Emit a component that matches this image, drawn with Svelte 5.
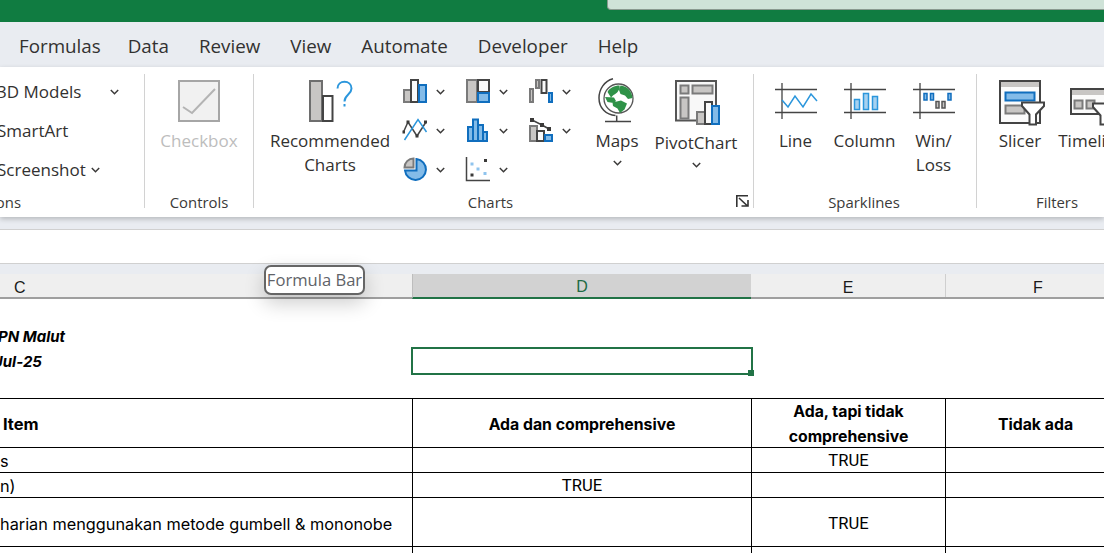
<script>
  const tabs = ['Formulas', 'Data', 'Review', 'View', 'Automate', 'Developer', 'Help'];
  const rows = [
    { cls: 'head', item: 'Item', d: 'Ada dan comprehensive', e: 'Ada, tapi tidak comprehensive', f: 'Tidak ada' },
    { cls: 'r25', item: 's', d: '', e: 'TRUE', f: '' },
    { cls: 'r25', item: 'n)', d: 'TRUE', e: '', f: '' },
    { cls: 'r49', item: 'harian menggunakan metode gumbell & mononobe', d: '', e: 'TRUE', f: '' },
    { cls: 'r25', item: '', d: '', e: '', f: '' }
  ];
</script>

{#snippet chev()}
  <svg class="chev" width="9" height="6" viewBox="0 0 9 6"><path d="M.8 1 4.5 4.7 8.2 1" /></svg>
{/snippet}

{#snippet small(body)}
  <div class="small">
    <svg width="24" height="24" viewBox="0 0 24 24">{@render body()}</svg>
    {@render chev()}
  </div>
{/snippet}

{#snippet i1()}
  <rect class="g" x="1" y="11" width="7" height="12" /><rect class="w" x="8" y="1" width="7" height="22" /><rect class="b" x="16" y="6" width="7" height="17" />
{/snippet}
{#snippet i2()}
  <rect class="g" x="1" y="1" width="10" height="22" /><rect class="w" x="12" y="1" width="11" height="12" /><rect class="b" x="12" y="14" width="11" height="9" />
{/snippet}
{#snippet i3()}
  <rect class="g" x="1" y="10" width="3" height="13" /><rect class="g" x="7" y="1" width="3" height="8" /><rect class="w" x="12.5" y="1" width="5" height="13" /><rect class="b" x="20" y="14" width="3" height="9" />
{/snippet}
{#snippet i4()}
  <path class="ld" d="M.5 14 5 4l9 14 9-14" /><path class="lb" d="M1.5 22 15 1.500 23.500 14" />
  <rect class="dk" x="3.500" y="2.500" width="3" height="3" /><rect class="dk" x="12.500" y="16.500" width="3" height="3" /><rect class="dk" x="21" y="2.500" width="3" height="3" /><rect class="dk" x="-.500" y="12.500" width="2.500" height="3" />
{/snippet}
{#snippet i5()}
  <rect class="b" x="2" y="9" width="5" height="14" /><rect class="b" x="7" y="1.500" width="5" height="21.500" /><rect class="b" x="12" y="7" width="5" height="16" /><rect class="b" x="17" y="14" width="4" height="9" />
{/snippet}
{#snippet i6()}
  <rect class="g" x="1" y="8" width="7" height="15" /><rect class="w" x="8" y="13" width="7" height="10" /><rect class="b" x="16" y="17" width="7" height="6" />
  <path class="ld" d="M3 2 13 7l7 4" /><rect class="dk" x="1" y="0" width="4" height="4" /><rect class="dk" x="11" y="5" width="4" height="4" /><rect class="dk" x="18" y="9" width="4" height="4" />
{/snippet}
{#snippet i7()}
  <path class="g" d="M10.500 1.500A9 9 0 0 0 1.500 10.500h9z" /><path class="pie" d="M13.500 2a10.500 10.500 0 1 1-11.500 11.500h11.500z" />
{/snippet}
{#snippet i8()}
  <path class="ld" d="M.5 0v23.500H24" />
  <rect class="dk" x="18" y="2" width="3" height="3" /><rect class="lt" x="4.500" y="5.500" width="3" height="3" /><rect class="lt" x="10.500" y="10.500" width="3" height="3" /><rect class="lt" x="17.500" y="15" width="3" height="3" /><rect class="dk" x="4.500" y="16.500" width="3" height="3" />
{/snippet}

<div class="page">
  <div class="titlebar"><div class="search"></div></div>

  <nav class="tabs">
    {#each tabs as t}<span>{t}</span>{/each}
  </nav>

  <section class="ribbon">
    <div class="group g-ill">
      <div class="body list">
        <div class="row models"><span>3D Models</span>{@render chev()}</div>
        <div class="row"><span>SmartArt</span></div>
        <div class="row shot"><span>Screenshot</span>{@render chev()}</div>
      </div>
      <div class="label ill"><span>Illustrations</span></div>
    </div>

    <div class="group g-ctl">
      <div class="body">
        <div class="big ctl">
          <div class="ic">
            <svg width="42" height="42" viewBox="0 0 42 42"><rect x="1" y="1" width="40" height="40" fill="#f1f1f1" stroke="#a6a6a6" stroke-width="2" /><path d="M5 27l9 6L37 9" fill="none" stroke="#b4b4b4" stroke-width="2" /></svg>
          </div>
          <span class="off">Checkbox</span>
        </div>
      </div>
      <div class="label">Controls</div>
    </div>

    <div class="group g-chart">
      <div class="body">
        <div class="big rec">
          <div class="ic">
            <svg width="44" height="42" viewBox="0 0 44 42">
              <rect x="1" y="1" width="12" height="40" fill="#c8c6c4" stroke="#6e6e6e" stroke-width="2" />
              <rect x="14" y="16" width="9.500" height="25" fill="#fff" stroke="#444" stroke-width="2" />
              <path d="M28.500 8.500c0-9 14-9 14 0 0 6-7 6-7 13" fill="none" stroke="#2b96dc" stroke-width="2" />
              <rect x="34.500" y="24" width="2" height="2.500" fill="#2b96dc" />
            </svg>
          </div>
          <span>Recommended<br />Charts</span>
        </div>

        <div class="smalls">
          {@render small(i1)}{@render small(i2)}{@render small(i3)}
          {@render small(i4)}{@render small(i5)}{@render small(i6)}
          {@render small(i7)}{@render small(i8)}
        </div>

        <div class="big maps">
          <div class="ic globe">
            <svg width="38" height="46" viewBox="0 0 38 46">
              <circle cx="20.500" cy="20.500" r="14.500" fill="#fff" stroke="#555" stroke-width="1.300" />
              <path d="M9.500 14c2-4 7-6.500 12-6.500 1 3-2 8-6 9.500l-2.500 2.500zM22.500 7.500c6.500.5 11.500 5.500 12 12.500l-4.500 1-3-3.500-4.500-1.500-1.500-4zM7 19l9 .5 2 3.500-2.500 2-6-1zM14.500 24.500l8.500-2 6 3-2.500 6-4.500 3.500-2.500-4.500-4.500-2.500z" fill="#2f9248" />
              <path d="M15 .8C6.500 3 1 11 1 20c0 10 7 17 16.500 17.500M18.700 37.500V43M7 43.500h26" fill="none" stroke="#444" stroke-width="1.500" />
            </svg>
          </div>
          <span>Maps</span>
          {@render chev()}
        </div>

        <div class="big pivot">
          <div class="ic">
            <svg width="45" height="45" viewBox="0 0 45 45">
              <path d="M22 40.500H1V1h40v25" fill="#f8f8f8" stroke="#555" stroke-width="2" />
              <rect x="5.500" y="5.500" width="8" height="8" class="g" /><rect x="17.500" y="5.500" width="20" height="8" class="g" /><rect x="5.500" y="17.500" width="8" height="21" class="g" />
              <rect x="22" y="32" width="8" height="12" class="g" /><rect x="30" y="22" width="7" height="22" class="w" /><rect x="37" y="26" width="7" height="18" class="b" />
            </svg>
          </div>
          <span>PivotChart</span>
          {@render chev()}
        </div>
      </div>
      <div class="label charts">Charts</div>
      <svg class="launch" width="13" height="12" viewBox="0 0 13 12"><path d="M.8 12V.8H12M3 3l8 7.500M5.500 11h6.500V5" fill="none" stroke="#333" stroke-width="1.600" /></svg>
    </div>

    <div class="group g-spark">
      <div class="body">
        <div class="big spark">
          <div class="ic">
            <svg class="sp" width="42" height="36" viewBox="0 0 42 36"><path class="axis" d="M0 6.500h42M0 29.500h42M7 0v36" /><path d="M7 17l6 7 7-11 8 11 8-13 6 7" fill="none" stroke="#2b96dc" stroke-width="1.500" /></svg>
          </div>
          <span>Line</span>
        </div>
        <div class="big spark">
          <div class="ic">
            <svg class="sp" width="42" height="36" viewBox="0 0 42 36"><path class="axis" d="M0 6.500h42M0 29.500h42M7 0v36" /><rect class="sb" x="10.500" y="16.500" width="5" height="10" /><rect class="sb" x="19.500" y="10.500" width="5" height="16" /><rect class="sb" x="28.500" y="13.500" width="5" height="13" /></svg>
          </div>
          <span>Column</span>
        </div>
        <div class="big spark">
          <div class="ic">
            <svg class="sp" width="42" height="36" viewBox="0 0 42 36"><path class="axis" d="M0 6.500h42M0 29.500h42M7 0v36" />
              <rect class="wl" x="11" y="10.500" width="3" height="6.500" /><rect class="wl" x="17.500" y="10.500" width="3" height="6.500" /><rect class="ls" x="23" y="18.500" width="3" height="6.500" /><rect class="ls" x="29" y="18.500" width="3" height="6.500" /><rect class="wl" x="35" y="10.500" width="3" height="6.500" />
            </svg>
          </div>
          <span>Win/<br />Loss</span>
        </div>
      </div>
      <div class="label spk">Sparklines</div>
    </div>

    <div class="group g-filter">
      <div class="body">
        <div class="big slicer">
          <div class="ic">
            <svg width="46" height="45" viewBox="0 0 46 45">
              <rect x="1" y="1" width="40" height="42" fill="#fbfbfb" stroke="#444" stroke-width="2" /><rect x="2" y="2" width="38" height="5" fill="#c8c6c4" />
              <rect x="6.500" y="12.500" width="29" height="8" class="b" /><rect x="6.500" y="25.500" width="19" height="8" class="g" />
              <path class="fun" d="M23 22.500h22v3.500l-8 8.500v10h-6.500v-10l-7.500-8.500z" />
            </svg>
          </div>
          <span>Slicer</span>
        </div>
        <div class="big timeline">
          <div class="ic">
            <svg width="46" height="45" viewBox="0 0 46 45">
              <rect x="1" y="9" width="60" height="25" fill="#fbfbfb" stroke="#444" stroke-width="2" /><rect x="2" y="10" width="58" height="5" fill="#c8c6c4" />
              <rect x="4.500" y="20.500" width="8" height="8" class="g" /><rect x="16.500" y="20.500" width="8" height="8" class="g" />
              <path class="fun" d="M23 23.500h22v3.500l-8 8.500v9h-6.500v-9l-7.500-8.500z" />
            </svg>
          </div>
          <span>Timeline</span>
        </div>
      </div>
      <div class="label filt">Filters</div>
    </div>
  </section>

  <div class="formula"></div>

  <div class="sheet">
    <div class="colheads">
      <div class="ch c"><span>C</span></div>
      <div class="ch d"><span>D</span></div>
      <div class="ch e"><span>E</span></div>
      <div class="ch f"><span>F</span></div>
    </div>
    <div class="tooltip">Formula Bar</div>

    <div class="blank first"></div>
    <div class="titlerow"><span class="pn">PN Malut</span></div>
    <div class="titlerow">
      <span class="jul">Jul-25</span>
      <div class="selected"><i></i></div>
    </div>
    <div class="blank"></div>

    <div class="table">
      {#each rows as r}
        <div class="tr {r.cls}">
          <div class="td item"><span>{r.item}</span></div>
          <div class="td">{r.d}</div>
          <div class="td">{r.e}</div>
          <div class="td">{r.f}</div>
        </div>
      {/each}
    </div>
  </div>
</div>

<style>
  :global(body) { margin: 0; background: #fff; overflow: hidden; }
  .page { width: 1104px; height: 553px; overflow: hidden; position: relative; background: #e9ecf1; font-family: "Open Sans", "Noto Sans", sans-serif; color: #323130; }

  .titlebar { height: 22px; background: #107c41; display: flex; justify-content: flex-end; align-items: flex-start; }
  .search { width: 496px; height: 9px; background: #cfe3d8; border-bottom: 1px solid #8a9a90; border-left: 1px solid #8a9a90; border-bottom-left-radius: 4px; }

  .tabs { height: 45px; box-sizing: border-box; padding: 2px 0 0 19px; background: #e9ecf1; display: flex; align-items: center; gap: 30px; font-size: 18.8px; color: #323130; }
  .tabs span:first-child { margin-right: -3px; }

  .ribbon { height: 150px; box-sizing: border-box; background: #fff; display: flex; padding: 7px 0 9px; position: relative; box-shadow: 0 2px 5px rgba(0,0,0,.22); z-index: 2; }
  .group { display: flex; flex-direction: column; flex: none; box-sizing: border-box; border-right: 1px solid #d2d2d2; position: relative; font-size: 17px; line-height: 24px; }
  .body { flex: 1; display: flex; min-height: 0; }
  .label { height: 24px; box-sizing: border-box; padding-top: 5px; line-height: 26px; font-size: 14.9px; text-align: center; color: #3b3a39; }

  .g-ill { width: 145px; }
  .g-ctl { width: 109px; }
  .g-chart { width: 500px; }
  .g-spark { width: 223px; }
  .g-filter { width: 170px; border-right: 0; }

  .list { flex-direction: column; margin-top: -2px; }
  .row { height: 39px; display: flex; align-items: center; margin-left: -3px; flex: none; }
  .models { gap: 29px; }
  .shot { gap: 5px; }
  .ill { width: 21px; display: flex; justify-content: flex-end; white-space: nowrap; }

  .big { display: flex; flex-direction: column; align-items: center; text-align: center; padding-top: 6px; flex: none; }
  .ic { height: 49px; display: flex; align-items: flex-start; justify-content: center; }
  .off { color: #bdbdbd; }
  .ctl { width: 108px; }
  .rec { width: 120px; margin-left: 16px; }
  .rec .ic { padding-left: 2px; }
  .maps { width: 50px; }
  .globe { margin-top: -2px; height: 51px; }
  .pivot { width: 108px; }
  .pivot .ic { height: 51px; padding-left: 2px; }
  .big .chev { margin-top: 7px; }
  .spark { width: 69px; padding-top: 9px; }
  .spark .ic { height: 46px; }
  .spark:first-child { margin-left: 7px; }
  .slicer { width: 56px; margin-left: 15px; }
  .slicer .ic { margin-left: 3px; }
  .timeline { width: 90px; margin-left: -1px; }
  .timeline .ic { padding-left: 2px; }
  .filt { padding-right: 10px; }
  .charts { padding-right: 26px; }
  .spk { padding-right: 2px; }
  .launch { position: absolute; right: 4px; bottom: 1px; }

  .smalls { display: grid; grid-template-columns: repeat(3, 63px); grid-auto-rows: 39px; margin-left: 13px; padding-top: 5px; }
  .small { display: flex; align-items: flex-start; gap: 9px; }
  .small .chev { margin-top: 10px; }

  svg { display: block; overflow: visible; flex: none; }
  .chev path { fill: none; stroke: #3b3a39; stroke-width: 1.5; }
  .g { fill: #c8c6c4; stroke: #7a7a7a; stroke-width: 2; }
  .w { fill: #fafafa; stroke: #444; stroke-width: 2; }
  .b { fill: #83bbe8; stroke: #106ebe; stroke-width: 2; }
  .ld { fill: none; stroke: #444; stroke-width: 1.5; }
  .lb { fill: none; stroke: #2b96dc; stroke-width: 1.5; }
  .dk { fill: #3b3a39; }
  .lt { fill: #8fc4ee; }
  .pie { fill: #83bbe8; stroke: #106ebe; stroke-width: 2; }
  .axis { fill: none; stroke: #444; stroke-width: 1.3; }
  .sb { fill: #a6d1f0; stroke: #2b96dc; stroke-width: 1.5; }
  .wl { fill: #83bbe8; stroke: #106ebe; stroke-width: 1.5; }
  .ls { fill: #c8c6c4; stroke: #555; stroke-width: 1.5; }
  .fun { fill: #fff; stroke: #444; stroke-width: 2; }

  .formula { height: 35px; margin-top: 12px; background: #fff; border-top: 1px solid #d0d0d0; border-bottom: 1px solid #d0d0d0; box-sizing: border-box; }

  .sheet { position: relative; background: #fff; margin-top: 10px; height: 279px; }
  .colheads { display: grid; grid-template-columns: 412px 339px 195px 180px; height: 25px; box-sizing: border-box; background: #efefef; font-family: "Liberation Sans", sans-serif; font-size: 16px; border-bottom: 2px solid #9f9f9f; }
  .ch { display: flex; justify-content: center; align-items: center; padding-top: 4px; height: 23px; box-sizing: border-box; color: #1a1a1a; }
  .c { justify-content: flex-start; }
  .c span { margin-left: 14px; }
  .d { background: #d2d2d2; color: #1e6b45; height: 25px; padding-top: 2px; border-left: 1px solid #bdbdbd; border-bottom: 2px solid #217346; }
  .e { border-right: 1px solid #cfcfcf; }
  .f { padding-left: 4px; }

  .tooltip { position: absolute; left: 264px; top: -9px; width: 101px; height: 30px; box-sizing: border-box; border: 2px solid #666; border-radius: 7px; background: #fff; color: #5f6368; font-size: 16.6px; line-height: 26px; text-align: center; white-space: nowrap; box-shadow: 0 8px 20px rgba(0,0,0,.2); z-index: 3; }

  .blank { height: 25px; }
  .blank.first { height: 24px; }
  .titlerow { height: 25px; box-sizing: border-box; padding-top: 2px; display: flex; align-items: center; position: relative; font-family: "Inter", sans-serif; font-weight: 700; font-style: italic; font-size: 15px; color: #000; }
  .pn { margin-left: -2px; }
  .jul { margin-left: -6px; }
  .selected { position: absolute; left: 411px; top: -1px; width: 342px; height: 28px; box-sizing: border-box; border: 2px solid #217346; }
  .selected i { position: absolute; right: -3px; bottom: -3px; width: 6px; height: 6px; background: #217346; }

  .table { border-top: 1px solid #000; color: #000; }
  .tr { display: grid; grid-template-columns: 412px 339px 194px 180px; box-sizing: border-box; border-bottom: 1px solid #000; }
  .head { height: 49px; }
  .r25 { height: 25px; }
  .r49 { height: 49px; }
  .td { display: flex; align-items: center; justify-content: center; box-sizing: border-box; text-align: center; border-left: 1px solid #000; font-family: "Roboto", sans-serif; font-size: 16.6px; line-height: 26px; }
  .r49 .td { padding-top: 4px; }
  .head .td { font-family: "Inter", sans-serif; font-size: 15.8px; line-height: 25px; font-weight: 700; }
  .td.item { border-left: 0; justify-content: flex-start; white-space: nowrap; font-family: "Inter", sans-serif; font-size: 16.3px; }
  .head .td.item { padding-left: 3px; font-size: 16.5px; }
</style>
